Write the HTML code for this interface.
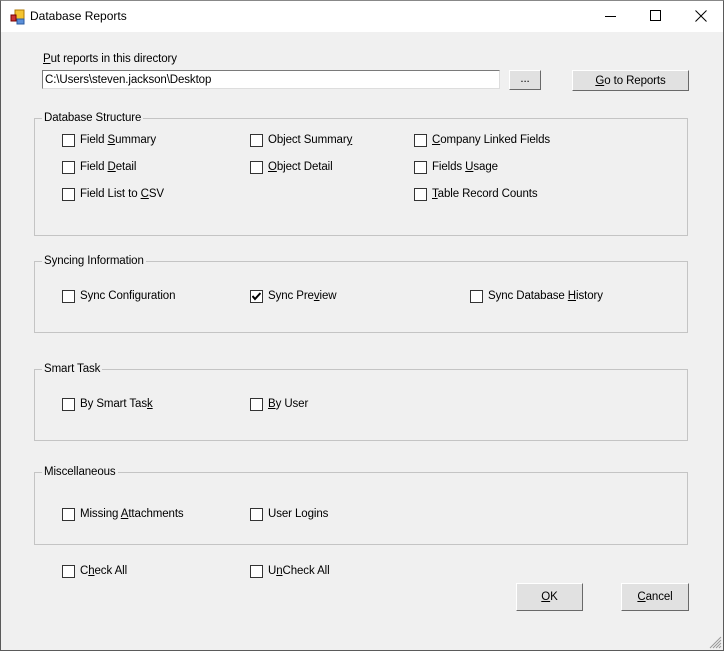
<!DOCTYPE html>
<html><head><style>
*{margin:0;padding:0;box-sizing:border-box}
body{width:724px;height:651px;background:#f0f0f0;font:11.5px/17px "Liberation Sans",Arial,sans-serif;letter-spacing:-0.1px;color:#000;position:relative;overflow:hidden}
.win{position:absolute;left:0;top:0;width:724px;height:651px;border:1px solid #5a5a5a;border-top-color:#888}
.title{position:absolute;left:1px;top:1px;width:722px;height:31px;background:#fff;font-size:12px;line-height:normal;letter-spacing:0}
.a{position:absolute;white-space:nowrap}
.cb{position:absolute;width:13px;height:13px;border:1px solid #333;background:#fff}
.grp{position:absolute;border:1px solid #c4c4c4}
.gl{position:absolute;background:#f0f0f0;padding:0 2px;top:-9px;left:7px}
.btn{position:absolute;background:#e1e1e1;border:1px solid;border-color:#fff #696969 #696969 #fff;text-align:center}
u{text-decoration:underline}
</style></head><body>
<div class="win"></div>
<div class="title">
<svg class="a" style="left:9px;top:8px" width="16" height="16"><rect x="5" y="1" width="9" height="9" fill="#f4c430" stroke="#b07800"/><rect x="1" y="6" width="5" height="6" fill="#c33" stroke="#700"/><rect x="7" y="10" width="7" height="5" fill="#5b8fd9" stroke="#2a5aa0"/></svg>
<div class="a" style="left:29px;top:8px">Database Reports</div>
<div class="a" style="left:604px;top:15px;width:11px;height:1px;background:#000"></div>
<div class="a" style="left:649px;top:9px;width:11px;height:11px;border:1px solid #000"></div>
<svg class="a" style="left:694px;top:9px" width="12" height="12"><path d="M0.5 0.5L11.5 11.5M11.5 0.5L0.5 11.5" stroke="#000" stroke-width="1"/></svg>
</div>
<div class="a" style="left:43px;top:51px"><u>P</u>ut reports in this directory</div>
<div class="a" style="left:42px;top:70px;width:458px;height:19px;background:#fff;border:1px solid #7a7a7a;border-right-color:#ddd;border-bottom-color:#ddd;padding:1px 2px;line-height:17px">C:\Users\steven.jackson\Desktop</div>
<div class="btn" style="left:509px;top:70px;width:32px;height:20px;line-height:17px">...</div>
<div class="btn" style="left:572px;top:70px;width:117px;height:21px;line-height:20px"><u>G</u>o to Reports</div>

<div class="grp" style="left:34px;top:118px;width:654px;height:118px"><span class="gl">Database Structure</span></div>
<div class="cb" style="left:62px;top:134px"></div><div class="a" style="left:80px;top:132px">Field <u>S</u>ummary</div>
<div class="cb" style="left:62px;top:161px"></div><div class="a" style="left:80px;top:159px">Field <u>D</u>etail</div>
<div class="cb" style="left:62px;top:188px"></div><div class="a" style="left:80px;top:186px">Field List to <u>C</u>SV</div>
<div class="cb" style="left:250px;top:134px"></div><div class="a" style="left:268px;top:132px">Object Summar<u>y</u></div>
<div class="cb" style="left:250px;top:161px"></div><div class="a" style="left:268px;top:159px"><u>O</u>bject Detail</div>
<div class="cb" style="left:414px;top:134px"></div><div class="a" style="left:432px;top:132px"><u>C</u>ompany Linked Fields</div>
<div class="cb" style="left:414px;top:161px"></div><div class="a" style="left:432px;top:159px">Fields <u>U</u>sage</div>
<div class="cb" style="left:414px;top:188px"></div><div class="a" style="left:432px;top:186px"><u>T</u>able Record Counts</div>

<div class="grp" style="left:34px;top:261px;width:654px;height:72px"><span class="gl">Syncing Information</span></div>
<div class="cb" style="left:62px;top:290px"></div><div class="a" style="left:80px;top:288px">Sync Configuration</div>
<div class="cb" style="left:250px;top:290px"></div><svg class="a" style="left:252px;top:292px" width="9" height="9"><path d="M0.5 4L3 7L8.5 1" stroke="#000" stroke-width="2" fill="none"/></svg><div class="a" style="left:268px;top:288px">Sync Pre<u>v</u>iew</div>
<div class="cb" style="left:470px;top:290px"></div><div class="a" style="left:488px;top:288px">Sync Database <u>H</u>istory</div>

<div class="grp" style="left:34px;top:369px;width:654px;height:72px"><span class="gl">Smart Task</span></div>
<div class="cb" style="left:62px;top:398px"></div><div class="a" style="left:80px;top:396px">By Smart Tas<u>k</u></div>
<div class="cb" style="left:250px;top:398px"></div><div class="a" style="left:268px;top:396px"><u>B</u>y User</div>

<div class="grp" style="left:34px;top:472px;width:654px;height:73px"><span class="gl">Miscellaneous</span></div>
<div class="cb" style="left:62px;top:508px"></div><div class="a" style="left:80px;top:506px">Missing <u>A</u>ttachments</div>
<div class="cb" style="left:250px;top:508px"></div><div class="a" style="left:268px;top:506px">User Lo<u>g</u>ins</div>

<div class="cb" style="left:62px;top:565px"></div><div class="a" style="left:80px;top:563px">C<u>h</u>eck All</div>
<div class="cb" style="left:250px;top:565px"></div><div class="a" style="left:268px;top:563px">U<u>n</u>Check All</div>

<div class="btn" style="left:516px;top:583px;width:67px;height:28px;line-height:27px"><u>O</u>K</div>
<div class="btn" style="left:621px;top:583px;width:68px;height:28px;line-height:27px"><u>C</u>ancel</div>
<svg class="a" style="left:709px;top:636px" width="13" height="13"><path d="M12 1L1 12M12 4L4 12M12 7L7 12M12 10L10 12" stroke="#999" stroke-width="1"/></svg>
</body></html>
